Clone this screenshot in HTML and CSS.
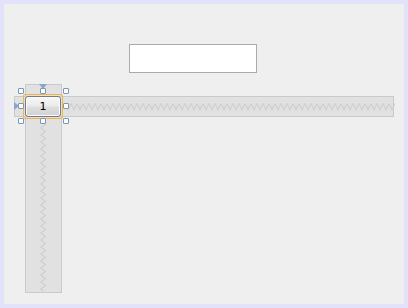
FILE: index.html
```html
<!DOCTYPE html>
<html>
<head>
<meta charset="utf-8">
<link rel="stylesheet" href="styles.css">
</head>
<body>
<div class="frame">
  <div class="canvas">
    <div class="textbox"></div>
    <div class="vstrip">
      <svg class="zz-v" width="8" height="170" viewBox="0 0 8 170">
        <defs>
          <pattern id="zv" width="8" height="7" patternUnits="userSpaceOnUse">
            <polyline points="1.5,0 6.5,3.5 1.5,7" fill="none" stroke="#d0d0d0" stroke-width="1.3"/>
          </pattern>
        </defs>
        <rect width="8" height="170" fill="url(#zv)"/>
      </svg>
    </div>
    <div class="hstrip">
      <svg class="zz-h" width="330" height="9" viewBox="0 0 330 9">
        <defs>
          <pattern id="zh" width="6" height="9" patternUnits="userSpaceOnUse">
            <polyline points="0,1.5 3,7.5 6,1.5" fill="none" stroke="#d0d0d0" stroke-width="1.3"/>
          </pattern>
        </defs>
        <rect width="330" height="9" fill="url(#zh)"/>
      </svg>
    </div>
    <div class="tri-down"></div>
    <div class="tri-right"></div>
    <div class="selection"></div>
    <button class="cellbtn">1</button>
    <span class="h c1 r1"></span>
    <span class="h c2 r1"></span>
    <span class="h c3 r1"></span>
    <span class="h c1 r2"></span>
    <span class="h c3 r2"></span>
    <span class="h c1 r3"></span>
    <span class="h c2 r3"></span>
    <span class="h c3 r3"></span>
  </div>
</div>
</body>
</html>
```
FILE: styles.css
```css
html, body {
  margin: 0;
  padding: 0;
}
body {
  width: 408px;
  height: 308px;
  background: #e2e2fa;
  font-family: "DejaVu Sans", "Liberation Sans", sans-serif;
  overflow: hidden;
}
.frame {
  padding: 4px;
  width: 400px;
  height: 300px;
}
.canvas {
  position: relative;
  width: 400px;
  height: 300px;
  background: #efefef;
  margin: 0;
}
/* coordinates below are page coords minus 4 */
.textbox {
  position: absolute;
  left: 125px;
  top: 40px;
  width: 126px;
  height: 27px;
  background: #ffffff;
  border: 1px solid #ababab;
}
.vstrip {
  position: absolute;
  left: 21px;
  top: 80px;
  width: 35px;
  height: 207px;
  background: #e1e1e1;
  border: 1px solid #cacaca;
}
.zz-v {
  position: absolute;
  left: 13px;
  top: 36px;
}
.hstrip {
  position: absolute;
  left: 10px;
  top: 92px;
  width: 378px;
  height: 19px;
  background: #e1e1e1;
  border: 1px solid #cacaca;
}
.zz-h {
  position: absolute;
  left: 50px;
  top: 5px;
}
.tri-down {
  position: absolute;
  left: 35px;
  top: 80px;
  width: 0;
  height: 0;
  border-left: 4px solid transparent;
  border-right: 4px solid transparent;
  border-top: 5px solid #8aa4cc;
}
.tri-right {
  position: absolute;
  left: 10px;
  top: 98px;
  width: 0;
  height: 0;
  border-top: 4px solid transparent;
  border-bottom: 4px solid transparent;
  border-left: 5px solid #8aa4cc;
}
.selection {
  position: absolute;
  left: 19px;
  top: 90px;
  width: 38px;
  height: 23px;
  border: 1px solid #f2b448;
  border-radius: 2px;
}
.cellbtn {
  position: absolute;
  left: 21px;
  top: 92px;
  width: 36px;
  height: 21px;
  margin: 0;
  padding: 0;
  border: 1px solid #7a7a7a;
  border-radius: 3px;
  background: linear-gradient(#f7f7f7 0%, #ececec 45%, #dddddd 55%, #d2d2d2 100%);
  box-shadow: inset 0 0 0 1px #fbfbfb;
  font-family: "DejaVu Sans", "Liberation Sans", sans-serif;
  font-size: 11px;
  color: #000;
  line-height: 19px;
  text-align: center;
}
.h {
  position: absolute;
  width: 4px;
  height: 4px;
  background: #ffffff;
  border: 1px solid #7f95b5;
  border-radius: 1px;
}
.c1 { left: 14px; }
.c2 { left: 36px; }
.c3 { left: 59px; }
.r1 { top: 84px; }
.r2 { top: 99px; }
.r3 { top: 114px; }
```
